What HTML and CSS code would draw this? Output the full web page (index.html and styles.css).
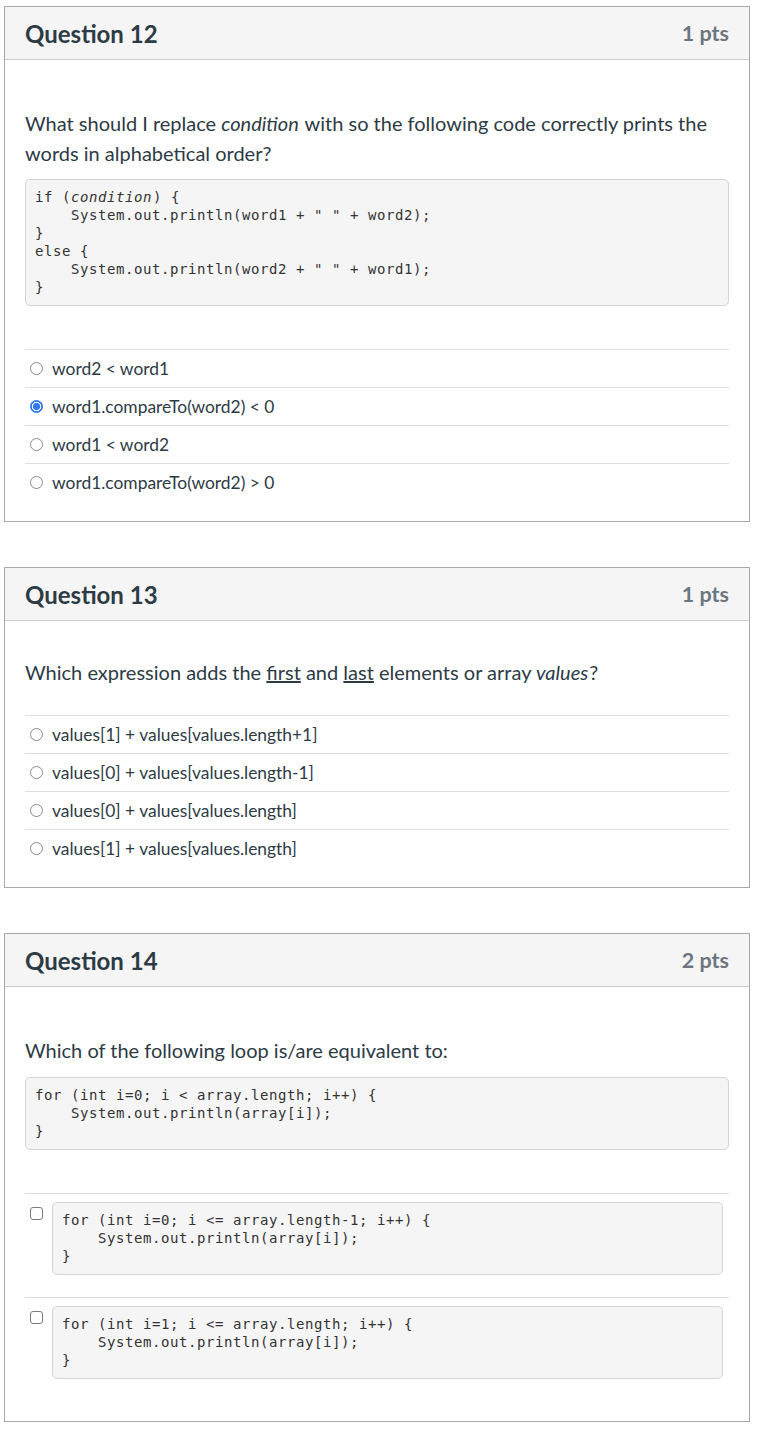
FILE: index.html
```html
<!DOCTYPE html>
<html>
<head>
<meta charset="utf-8">
<link rel="stylesheet" href="styles.css">
</head>
<body>
<div class="page">

  <div class="card">
    <div class="card-head">
      <span class="q-title">Question 12</span>
      <span class="q-pts">1 pts</span>
    </div>
    <div class="card-body">
      <div class="q-text">
        <p>What should I replace <em>condition</em> with so the following code correctly prints the words in alphabetical order?</p>
        <pre class="code">if (<em>condition</em>) {
    System.out.println(word1 + " " + word2);
}
else {
    System.out.println(word2 + " " + word1);
}</pre>
      </div>
      <div class="answers">
        <div class="answer"><span class="radio"></span><span class="a-text">word2 &lt; word1</span></div>
        <div class="answer"><span class="radio checked"></span><span class="a-text">word1.compareTo(word2) &lt; 0</span></div>
        <div class="answer"><span class="radio"></span><span class="a-text">word1 &lt; word2</span></div>
        <div class="answer"><span class="radio"></span><span class="a-text">word1.compareTo(word2) &gt; 0</span></div>
      </div>
    </div>
  </div>

  <div class="card">
    <div class="card-head">
      <span class="q-title">Question 13</span>
      <span class="q-pts">1 pts</span>
    </div>
    <div class="card-body short-top">
      <div class="q-text">
        <p>Which expression adds the <u>first</u> and <u>last</u> elements or array <em>values</em>?</p>
      </div>
      <div class="answers">
        <div class="answer"><span class="radio"></span><span class="a-text">values[1] + values[values.length+1]</span></div>
        <div class="answer"><span class="radio"></span><span class="a-text">values[0] + values[values.length-1]</span></div>
        <div class="answer"><span class="radio"></span><span class="a-text">values[0] + values[values.length]</span></div>
        <div class="answer"><span class="radio"></span><span class="a-text">values[1] + values[values.length]</span></div>
      </div>
    </div>
  </div>

  <div class="card">
    <div class="card-head">
      <span class="q-title">Question 14</span>
      <span class="q-pts">2 pts</span>
    </div>
    <div class="card-body">
      <div class="q-text">
        <p>Which of the following loop is/are equivalent to:</p>
        <pre class="code short">for (int i=0; i &lt; array.length; i++) {
    System.out.println(array[i]);
}</pre>
      </div>
      <div class="answers">
        <div class="answer code-answer"><span class="checkbox"></span><pre class="code">for (int i=0; i &lt;= array.length-1; i++) {
    System.out.println(array[i]);
}</pre></div>
        <div class="answer code-answer"><span class="checkbox"></span><pre class="code">for (int i=1; i &lt;= array.length; i++) {
    System.out.println(array[i]);
}</pre></div>
      </div>
    </div>
  </div>

</div>
</body>
</html>
```

FILE: styles.css
```css
* { box-sizing: border-box; }

html, body {
  margin: 0;
  padding: 0;
  background: #ffffff;
}

body {
  font-family: Lato, "Liberation Sans", sans-serif;
  color: #2d3b45;
}

.page {
  padding: 6px 14px 0 4px;
  display: flex;
  flex-direction: column;
  gap: 45px;
}

.card {
  border: 1px solid #a8a8a8;
  background: #fff;
}

.card-head {
  height: 53px;
  background: #f5f5f5;
  border-bottom: 1px solid #c7cdd1;
  display: flex;
  align-items: center;
  justify-content: space-between;
  padding: 0 20px 0 20px;
}

.q-title {
  font-size: 24px;
  font-weight: 700;
  color: #2d3b45;
}

.q-pts {
  font-size: 21.5px;
  font-weight: 700;
  color: #6b7680;
}

.card-body {
  padding: 48px 20px 20px 20px;
}

.card-body.short-top {
  padding-top: 36px;
}

.q-text {
  display: flow-root;
}

.q-text p {
  margin: 0;
  font-size: 20px;
  line-height: 30px;
}

.q-text em {
  font-style: italic;
  padding-right: 1px;
}

.code {
  margin: 11px 0 15px 0;
  padding: 8px 9px 9px 9px;
  background: #f5f5f5;
  border: 1px solid #d1d5d8;
  border-radius: 5px;
  font-family: "DejaVu Sans Mono", "Liberation Mono", monospace;
  font-size: 14px;
  letter-spacing: 0.57px;
  line-height: 18px;
  color: #333333;
  white-space: pre;
}

.code.short {
  margin-top: 12px;
}

.code em {
  font-style: italic;
}

.answers {
  margin-top: 28px;
}

.answer {
  display: flex;
  align-items: center;
  height: 38px;
  border-top: 1px solid #dcdfe2;
  font-size: 17.4px;
}

.radio {
  width: 13px;
  height: 13px;
  margin-left: 5px;
  margin-right: 9px;
  border-radius: 50%;
  border: 1px solid #8a8a8a;
  background: #fff;
  flex: none;
}

.radio.checked {
  border: 1px solid #1f6feb;
  background: radial-gradient(circle, #2f7cf6 0 3.4px, #ffffff 3.9px 4.6px, #3b82f6 5px);
}

.a-text {
  line-height: 22px;
  color: #2d3b45;
}

.answer.code-answer {
  height: auto;
  align-items: flex-start;
  padding: 8px 6px 8px 0;
}

.checkbox {
  width: 13px;
  height: 13px;
  margin: 5px 9px 0 5px;
  border: 1px solid #7a7a7a;
  border-radius: 3px;
  background: #fff;
  flex: none;
}

.code-answer .code {
  flex: 1;
  margin: 0 0 14px 0;
}
```
